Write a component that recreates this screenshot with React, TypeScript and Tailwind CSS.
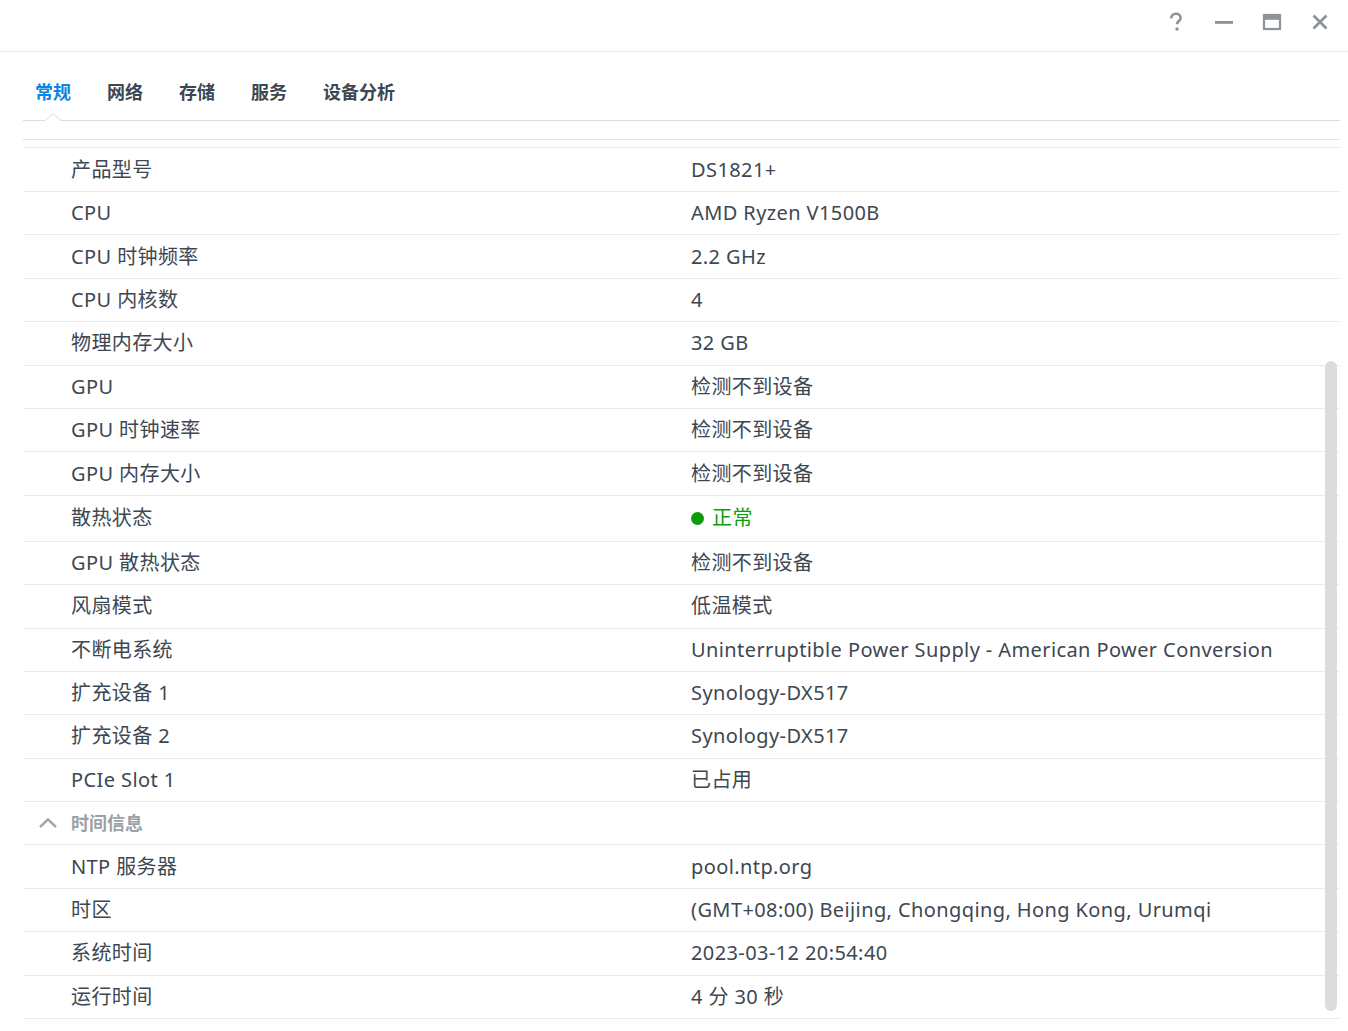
import React from "react"

type Row = { label: string; value: string; status?: boolean; tall?: boolean }

const hardware: Row[] = [
  { label: "产品型号", value: "DS1821+" },
  { label: "CPU", value: "AMD Ryzen V1500B" },
  { label: "CPU 时钟频率", value: "2.2 GHz" },
  { label: "CPU 内核数", value: "4" },
  { label: "物理内存大小", value: "32 GB" },
  { label: "GPU", value: "检测不到设备" },
  { label: "GPU 时钟速率", value: "检测不到设备" },
  { label: "GPU 内存大小", value: "检测不到设备" },
  { label: "散热状态", value: "正常", status: true, tall: true },
  { label: "GPU 散热状态", value: "检测不到设备" },
  { label: "风扇模式", value: "低温模式" },
  { label: "不断电系统", value: "Uninterruptible Power Supply - American Power Conversion" },
  { label: "扩充设备 1", value: "Synology-DX517" },
  { label: "扩充设备 2", value: "Synology-DX517" },
  { label: "PCIe Slot 1", value: "已占用" },
]

const timeInfo: Row[] = [
  { label: "NTP 服务器", value: "pool.ntp.org" },
  { label: "时区", value: "(GMT+08:00) Beijing, Chongqing, Hong Kong, Urumqi" },
  { label: "系统时间", value: "2023-03-12 20:54:40" },
  { label: "运行时间", value: "4 分 30 秒" },
]

const tabs = ["常规", "网络", "存储", "服务", "设备分析"]

const InfoRow = ({ row, first }: { row: Row; first?: boolean }) => (
  <div
    className={`flex items-center border-b border-[#e8ecf1] ${
      row.tall ? "h-[46px]" : first ? "h-[44px]" : "h-[43.4px]"
    }`}
  >
    <div className="w-[668px] shrink-0 pl-[48px] text-[#3d4752]">{row.label}</div>
    {row.status ? (
      <div className="flex items-center gap-[8px] text-[#0a9e0a]">
        <span className="h-[13px] w-[13px] rounded-full bg-[#0a9e0a]" />
        <span>{row.value}</span>
      </div>
    ) : (
      <div className="text-[#3d4752]">{row.value}</div>
    )}
  </div>
)

export default function App() {
  return (
    <div
      className="relative h-screen w-full overflow-hidden bg-white text-[20px] tracking-[0.02em]"
      style={{ fontFamily: '"Noto Sans", "Noto Sans CJK SC", sans-serif' }}
    >
      {/* title bar */}
      <div className="flex h-[52px] items-center justify-end gap-[28px] border-b border-[#e6e8ea] pr-[18px] pb-[8px]">
        <svg width="20" height="22" viewBox="0 0 20 22" className="text-[#8d9298]">
          <path
            d="M5.2 7.4c0-2.8 2.1-4.6 4.8-4.6 2.7 0 4.6 1.7 4.6 4.1 0 3-3.6 3.3-3.6 6.4"
            fill="none"
            stroke="currentColor"
            strokeWidth="2.6"
          />
          <circle cx="11" cy="18" r="1.7" fill="currentColor" />
        </svg>
        <svg width="20" height="20" viewBox="0 0 20 20" className="text-[#8d9298]">
          <rect x="1" y="9" width="18" height="2.8" fill="currentColor" />
        </svg>
        <svg width="20" height="20" viewBox="0 0 20 20" className="text-[#8d9298]">
          <rect x="2" y="3" width="16" height="14" fill="none" stroke="currentColor" strokeWidth="2.2" />
          <rect x="2" y="3" width="16" height="4.8" fill="currentColor" />
        </svg>
        <svg width="20" height="20" viewBox="0 0 20 20" className="text-[#8d9298]">
          <path d="M3.5 3.5l13 13M16.5 3.5l-13 13" stroke="currentColor" strokeWidth="2.8" />
        </svg>
      </div>

      <div className="ml-[23px] mr-[8px]">
        {/* tabs */}
        <div className="relative flex h-[69px] items-end gap-[36px] border-b border-[#d5dee7] pl-[12px] pb-[16px]">
          {tabs.map((t, i) => (
            <span
              key={t}
              className={`text-[18px] font-bold leading-[24px] tracking-normal ${
                i === 0 ? "text-[#0a86e2]" : "text-[#3d4752]"
              }`}
            >
              {t}
            </span>
          ))}
          <svg
            width="20"
            height="8"
            viewBox="0 0 20 8"
            className="absolute bottom-[-1px] left-[20px]"
          >
            <path d="M0 7.5h2L10 0.8 18 7.5h2v1H0z" fill="#fff" />
            <path d="M0 7.5h2L10 0.8 18 7.5h2" fill="none" stroke="#d5dee7" strokeWidth="1" />
          </svg>
        </div>

        <div className="h-[18px]" />
        <div className="h-[8px] border-t border-[#dce3ea]" />
        <div className="border-t border-[#e8ecf1]" />

        {hardware.map((r, i) => (
          <InfoRow key={r.label} row={r} first={i === 0} />
        ))}

        <div className="flex h-[43.4px] items-center border-b border-[#e8ecf1]">
          <svg width="20" height="12" viewBox="0 0 20 12" className="ml-[15px] mr-[13px] text-[#a4a9ae]">
            <path d="M2 10l8-7.5 8 7.5" fill="none" stroke="currentColor" strokeWidth="2.4" />
          </svg>
          <span className="text-[18px] font-bold tracking-normal text-[#9ba1a7]">时间信息</span>
        </div>

        {timeInfo.map((r) => (
          <InfoRow key={r.label} row={r} />
        ))}
      </div>

      {/* scrollbar thumb */}
      <div className="absolute left-[1325px] top-[361px] h-[650px] w-[12px] rounded-full bg-[#dcdcdc]" />
    </div>
  )
}
